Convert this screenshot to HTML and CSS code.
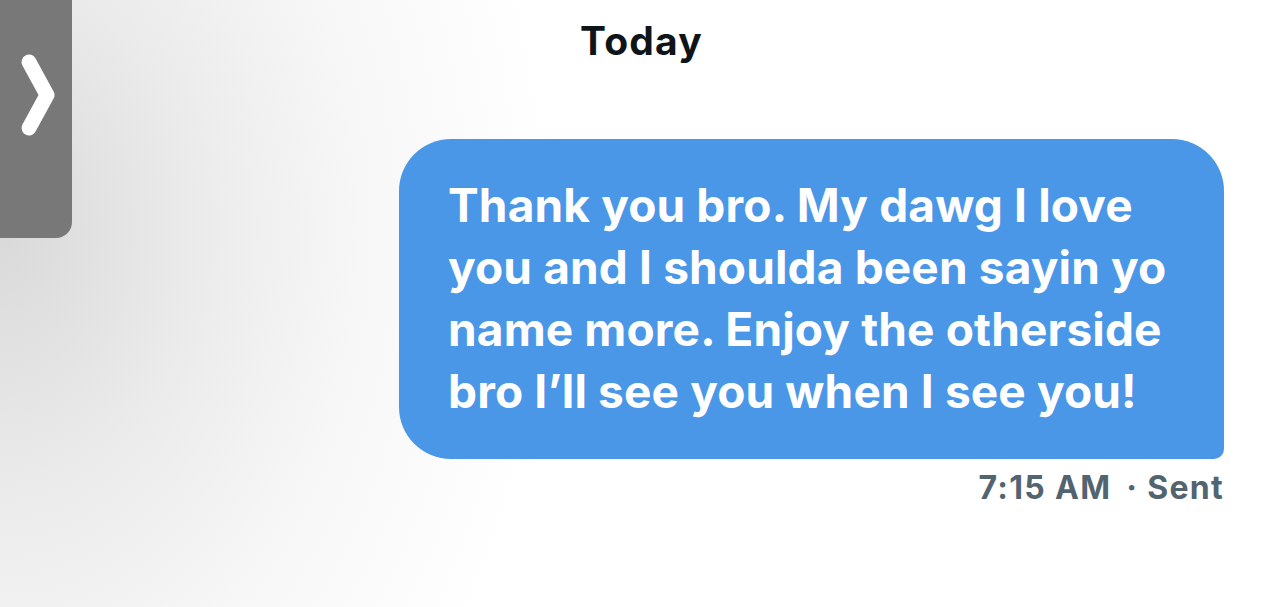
FILE: index.html
```html
<!DOCTYPE html>
<html lang="en">
<head>
    <meta charset="UTF-8">
    <title>Messages</title>
    <link rel="stylesheet" href="styles.css">
</head>
<body>
    <div class="side-tab">
        <svg class="chevron" width="72" height="190" viewBox="0 0 72 190">
            <path d="M29 62 L47 95 L29 128" fill="none" stroke="#fff" stroke-width="15" stroke-linecap="round" stroke-linejoin="round"/>
        </svg>
    </div>

    <div class="thread">
        <div class="day-label">Today</div>

        <div class="message sent">
            <div class="bubble">Thank you bro. My dawg I love you and I shoulda been sayin yo name more. Enjoy the otherside bro I’ll see you when I see you!</div>
            <div class="meta">
                <span class="time">7:15 AM</span>
                <span class="status">· Sent</span>
            </div>
        </div>
    </div>
</body>
</html>
```

FILE: styles.css
```css
body {
    margin: 0;
    height: 607px;
    overflow: hidden;
    font-family: Inter, 'Liberation Sans', sans-serif;
    background: radial-gradient(ellipse 560px 760px at 0 230px, #d9d9d9 0%, #ebebeb 35%, #f7f7f7 65%, #ffffff 100%);
    color: #0f1419;
}

.side-tab {
    position: absolute;
    top: 0;
    left: 0;
    width: 72px;
    height: 238px;
    background-color: #787878;
    border-bottom-right-radius: 16px;
}

.chevron {
    display: block;
}

.thread {
    display: flex;
    flex-direction: column;
    padding-top: 18px;
}

.day-label {
    text-align: center;
    font-size: 39px;
    line-height: 46px;
    font-weight: 700;
    letter-spacing: 1.2px;
}

.message.sent {
    display: flex;
    flex-direction: column;
    align-items: flex-end;
    margin-top: 75px;
    padding-right: 59px;
}

.bubble {
    box-sizing: border-box;
    width: 825px;
    padding: 35px 30px 37px 49px;
    background-color: #4a97e8;
    color: #ffffff;
    border-radius: 52px 52px 10px 52px;
    font-size: 46px;
    line-height: 62px;
    font-weight: 700;
    letter-spacing: 0.15px;
}

.meta {
    display: flex;
    gap: 15px;
    margin-top: 10px;
    color: #536471;
    font-size: 32px;
    line-height: 38px;
    font-weight: 700;
    letter-spacing: 1.3px;
}
```
